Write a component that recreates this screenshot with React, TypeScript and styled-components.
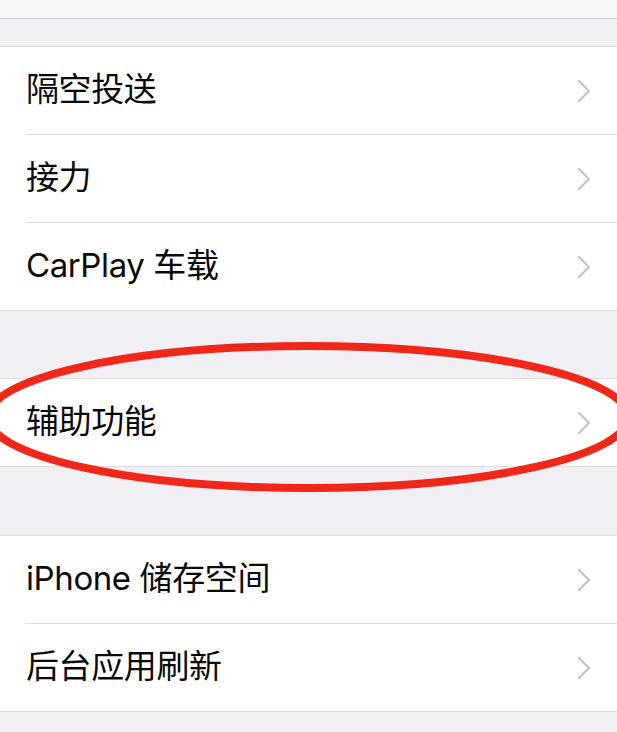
import styled, { createGlobalStyle } from 'styled-components';

const GlobalStyle = createGlobalStyle`
  html, body {
    margin: 0;
    padding: 0;
    background: #efeff4;
  }
  body {
    font-family: Inter, "Noto Sans CJK SC", sans-serif;
  }
`;

const Screen = styled.div`
  position: relative;
  width: 617px;
  height: 732px;
  overflow: hidden;
  background: #efeff4;
`;

const TopBar = styled.div`
  height: 18px;
  background: #f7f7f8;
  border-bottom: 1px solid #c8c7cc;
`;

const Spacer = styled.div<{ h: number }>`
  height: ${(p) => p.h}px;
`;

const Group = styled.div`
  background: #ffffff;
  border-top: 1px solid #dcdce0;
  border-bottom: 1px solid #dcdce0;
`;

const Row = styled.div`
  display: flex;
  align-items: center;
  height: 87px;
  padding-left: 26px;

  & + & {
    border-top: 1px solid #dcdce0;
    margin-left: 25px;
    padding-left: 1px;
  }
`;

const Label = styled.span`
  flex: 1;
  font-size: 33px;
  line-height: 1;
  letter-spacing: -0.4px;
  color: #0a0a0a;
  margin-top: -3px;
`;

const Chevron = styled.svg`
  width: 14px;
  height: 24px;
  margin-right: 26px;
  flex-shrink: 0;
`;

const Ring = styled.svg`
  position: absolute;
  left: 0;
  top: 0;
  pointer-events: none;
`;

function Arrow() {
  return (
    <Chevron viewBox="0 0 14 24">
      <path
        d="M2 2 L12 12 L2 22"
        fill="none"
        stroke="#c4c4c9"
        strokeWidth="2.4"
        strokeLinecap="round"
        strokeLinejoin="round"
      />
    </Chevron>
  );
}

const groups = [
  { gap: 67, items: ['隔空投送', '接力', 'CarPlay 车载'] },
  { gap: 68, items: ['辅助功能'] },
  { gap: 40, items: ['iPhone 储存空间', '后台应用刷新'] },
];

export default function App() {
  return (
    <Screen>
      <GlobalStyle />
      <TopBar />
      <Spacer h={27} />
      {groups.map((g, i) => (
        <div key={i}>
          <Group>
            {g.items.map((label) => (
              <Row key={label}>
                <Label>{label}</Label>
                <Arrow />
              </Row>
            ))}
          </Group>
          <Spacer h={g.gap} />
        </div>
      ))}
      <Ring width="617" height="732" viewBox="0 0 617 732">
        <ellipse
          cx="308"
          cy="417"
          rx="320"
          ry="71"
          fill="none"
          stroke="#f0281a"
          strokeWidth="8"
        />
      </Ring>
    </Screen>
  );
}
